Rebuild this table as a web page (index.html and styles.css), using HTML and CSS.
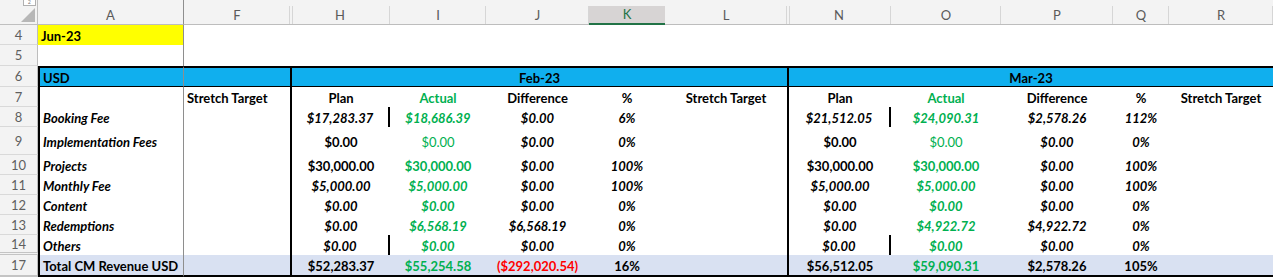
FILE: index.html
```html
<!DOCTYPE html>
<html>
<head>
<meta charset="utf-8">
<link rel="stylesheet" href="styles.css">
</head>
<body>
<div class="sheet">
  <!-- column header row -->
  <div class="corner"><div class="outline"><span>2</span></div><div class="tri"></div></div>
  <div class="ch fz">A</div>
  <div class="ch">F</div>
  <div class="ch dl">H</div>
  <div class="ch">I</div>
  <div class="ch">J</div>
  <div class="ch sel">K</div>
  <div class="ch">L</div>
  <div class="ch dl">N</div>
  <div class="ch">O</div>
  <div class="ch">P</div>
  <div class="ch">Q</div>
  <div class="ch">R</div>

  <!-- row 4 -->
  <div class="rh">4</div>
  <div class="c l a yel">Jun-23</div>
  <div class="c span-rest"></div>

  <!-- row 5 -->
  <div class="rh">5</div>
  <div class="c a"></div>
  <div class="c span-rest"></div>

  <!-- row 6 -->
  <div class="rh">6</div>
  <div class="c l a bl blue top">USD</div>
  <div class="c blue top"></div>
  <div class="c bl blue top span5">Feb-23</div>
  <div class="c bl blue top span5">Mar-23</div>

  <!-- row 7 -->
  <div class="rh">7</div>
  <div class="c a bl"></div>
  <div class="c l">Stretch Target</div>
  <div class="c bl">Plan</div>
  <div class="c g">Actual</div>
  <div class="c">Difference</div>
  <div class="c">%</div>
  <div class="c">Stretch Target</div>
  <div class="c bl">Plan</div>
  <div class="c g">Actual</div>
  <div class="c">Difference</div>
  <div class="c">%</div>
  <div class="c">Stretch Target</div>

  <!-- row 8 -->
  <div class="rh">8</div>
  <div class="c l a bl i">Booking Fee</div>
  <div class="c"></div>
  <div class="c bl mk i">$17,283.37</div>
  <div class="c g i">$18,686.39</div>
  <div class="c i">$0.00</div>
  <div class="c i">6%</div>
  <div class="c"></div>
  <div class="c bl mk i">$21,512.05</div>
  <div class="c g i">$24,090.31</div>
  <div class="c i">$2,578.26</div>
  <div class="c i">112%</div>
  <div class="c"></div>

  <!-- row 9 -->
  <div class="rh">9</div>
  <div class="c l a bl i">Implementation Fees</div>
  <div class="c"></div>
  <div class="c bl">$0.00</div>
  <div class="c g n">$0.00</div>
  <div class="c i">$0.00</div>
  <div class="c i">0%</div>
  <div class="c"></div>
  <div class="c bl">$0.00</div>
  <div class="c g n">$0.00</div>
  <div class="c i">$0.00</div>
  <div class="c i">0%</div>
  <div class="c"></div>

  <!-- row 10 -->
  <div class="rh">10</div>
  <div class="c l a bl i">Projects</div>
  <div class="c"></div>
  <div class="c bl">$30,000.00</div>
  <div class="c g">$30,000.00</div>
  <div class="c i">$0.00</div>
  <div class="c i">100%</div>
  <div class="c"></div>
  <div class="c bl">$30,000.00</div>
  <div class="c g">$30,000.00</div>
  <div class="c i">$0.00</div>
  <div class="c i">100%</div>
  <div class="c"></div>

  <!-- row 11 -->
  <div class="rh">11</div>
  <div class="c l a bl i">Monthly Fee</div>
  <div class="c"></div>
  <div class="c bl i">$5,000.00</div>
  <div class="c g i">$5,000.00</div>
  <div class="c i">$0.00</div>
  <div class="c i">100%</div>
  <div class="c"></div>
  <div class="c bl i">$5,000.00</div>
  <div class="c g i">$5,000.00</div>
  <div class="c i">$0.00</div>
  <div class="c i">100%</div>
  <div class="c"></div>

  <!-- row 12 -->
  <div class="rh">12</div>
  <div class="c l a bl i">Content</div>
  <div class="c"></div>
  <div class="c bl i">$0.00</div>
  <div class="c g i">$0.00</div>
  <div class="c i">$0.00</div>
  <div class="c i">0%</div>
  <div class="c"></div>
  <div class="c bl i">$0.00</div>
  <div class="c g i">$0.00</div>
  <div class="c i">$0.00</div>
  <div class="c i">0%</div>
  <div class="c"></div>

  <!-- row 13 -->
  <div class="rh">13</div>
  <div class="c l a bl i">Redemptions</div>
  <div class="c"></div>
  <div class="c bl i">$0.00</div>
  <div class="c g i">$6,568.19</div>
  <div class="c i">$6,568.19</div>
  <div class="c i">0%</div>
  <div class="c"></div>
  <div class="c bl i">$0.00</div>
  <div class="c g i">$4,922.72</div>
  <div class="c i">$4,922.72</div>
  <div class="c i">0%</div>
  <div class="c"></div>

  <!-- row 14 -->
  <div class="rh hidden-below">14</div>
  <div class="c l a bl i">Others</div>
  <div class="c"></div>
  <div class="c bl mk i">$0.00</div>
  <div class="c g i">$0.00</div>
  <div class="c i">$0.00</div>
  <div class="c i">0%</div>
  <div class="c"></div>
  <div class="c bl mk i">$0.00</div>
  <div class="c g i">$0.00</div>
  <div class="c i">$0.00</div>
  <div class="c i">0%</div>
  <div class="c"></div>

  <!-- row 17 -->
  <div class="rh last">17</div>
  <div class="c l a bl tot">Total CM Revenue USD</div>
  <div class="c tot"></div>
  <div class="c bl tot">$52,283.37</div>
  <div class="c g tot">$55,254.58</div>
  <div class="c red tot">($292,020.54)</div>
  <div class="c tot">16%</div>
  <div class="c tot"></div>
  <div class="c bl tot">$56,512.05</div>
  <div class="c g tot">$59,090.31</div>
  <div class="c tot">$2,578.26</div>
  <div class="c tot">105%</div>
  <div class="c tot"></div>
</div>
</body>
</html>
```

FILE: styles.css
```css
* { box-sizing: border-box; }

html, body {
  margin: 0;
  padding: 0;
  background: #ffffff;
}

.sheet {
  display: grid;
  grid-template-columns: 38px 146px 106px 100px 96px 103px 76px 122px 104px 110px 112px 56px 104px;
  grid-template-rows: 25px 20px 21px 21px 20px 20px 28px 20px 20px 20px 20px 20px 22px;
  width: 1273px;
  font-family: Lato, "Liberation Sans", sans-serif;
}

/* corner */
.corner {
  background: #f3f3f3;
  border-right: 1px solid #bfbfbf;
  border-bottom: 1px solid #bfbfbf;
  display: grid;
  grid-template-rows: 6px 1fr;
}
.outline {
  justify-self: end;
  width: 13px;
  height: 6px;
  margin-right: 1px;
  background: #ffffff;
  border: 1px solid #b0b0b0;
  border-top: none;
  font: 5px "Liberation Sans", sans-serif;
  color: #777;
  line-height: 5px;
  text-align: center;
}
.tri {
  justify-self: end;
  align-self: end;
  width: 14px;
  height: 14px;
  margin: 0 2px 2px 0;
  background: #b7b7b7;
  clip-path: polygon(100% 0, 100% 100%, 0 100%);
}

/* column headers */
.ch {
  background:
    linear-gradient(#d6d6d6, #d6d6d6) right 0 top 6px / 1px 19px no-repeat,
    #f3f3f3;
  border-bottom: 1px solid #bdbdbd;
  color: #5a5a5a;
  font-size: 13px;
  display: flex;
  align-items: center;
  justify-content: center;
  padding-top: 5px;
}
.ch.fz {
  background: #f3f3f3;
  border-right: 1px solid #8e8e8e;
}
.ch.dl {
  background:
    linear-gradient(#d6d6d6, #d6d6d6) left 2px top 6px / 1px 19px no-repeat,
    linear-gradient(#d6d6d6, #d6d6d6) right 0 top 6px / 1px 19px no-repeat,
    #f3f3f3;
}
.ch.sel {
  background:
    linear-gradient(#d7d4d4, #d7d4d4) left 0 top 6px / 100% 19px no-repeat,
    #f3f3f3;
  border-bottom: 2px solid #217346;
  color: #217346;
}

/* row headers */
.rh {
  background: #f3f3f3;
  border-right: 1px solid #bdbdbd;
  border-bottom: 1px solid #d9d9d9;
  color: #5f5f5f;
  font-size: 13px;
  display: flex;
  align-items: center;
  justify-content: center;
}
.rh.hidden-below {
  border-bottom: 3px double #c4c4c4;
}
.rh.last {
  border-bottom: 2px double #c4c4c4;
}

/* cells */
.c {
  display: flex;
  align-items: center;
  justify-content: center;
  white-space: nowrap;
  font-size: 13px;
  font-weight: 700;
  color: #000000;
  padding-top: 1px;
}
.l { justify-content: flex-start; padding-left: 3px; }
.i { font-style: italic; }
.n { font-weight: 400; }
.g { color: #00b050; }
.red { color: #ff0000; }

.a { border-right: 1px solid #8e8e8e; }
.bl { border-left: 2px solid #000000; }
.mk { border-right: 2px solid #000000; }

.yel { background: #ffff00; }
.blue {
  background: #10afee;
}
.top {
  border-top: 2px solid #000000;
  border-bottom: 1px solid #000000;
}
.tot {
  background: #d9e1f2;
  border-bottom: 2px solid #000000;
  font-style: normal;
}

.span-rest { grid-column: span 11; }
.span5 { grid-column: span 5; }
```
